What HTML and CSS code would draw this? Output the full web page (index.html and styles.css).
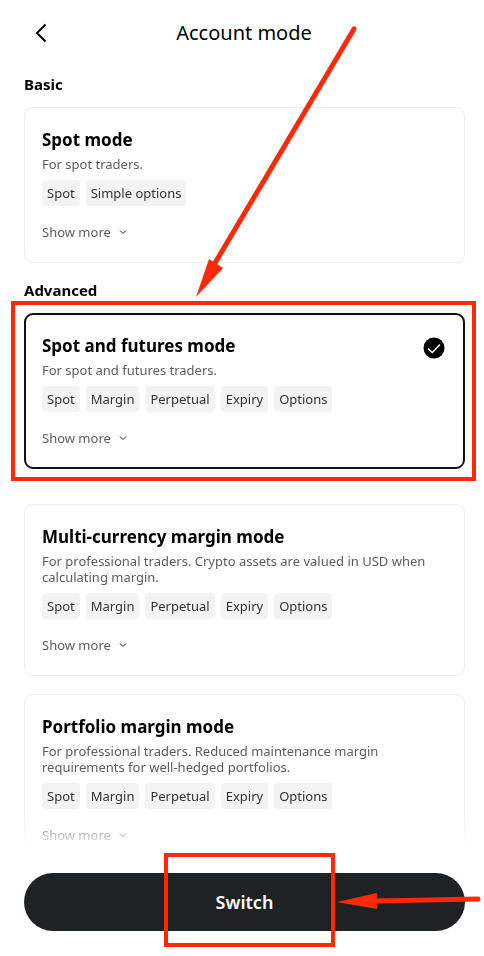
FILE: index.html
```html
<!DOCTYPE html>
<html lang="en">
<head>
<meta charset="utf-8">
<meta name="viewport" content="width=device-width, initial-scale=1">
<title>Account mode</title>
<link rel="stylesheet" href="styles.css">
</head>
<body>
<header class="topbar">
  <button class="back" type="button" aria-label="Back">
    <svg width="12" height="20" viewBox="0 0 12 20"><path d="M10.500 1.500 2 10 10.500 18.500" /></svg>
  </button>
  <h1 class="page-title">Account mode</h1>
</header>

<main class="modes">
  <section class="group">
    <h2 class="group-title">Basic</h2>
    <article class="card">
      <h3 class="card-title">Spot mode</h3>
      <p class="card-text">For spot traders.</p>
      <ul class="tags"><li class="tag">Spot</li><li class="tag">Simple options</li></ul>
      <button class="more" type="button">Show more <svg class="chevron" viewBox="0 0 8 6"><path d="M1 1.500 4 4.500 7 1.500" /></svg></button>
    </article>
  </section>

  <section class="group">
    <h2 class="group-title">Advanced</h2>
    <article class="card card-selected">
      <h3 class="card-title">Spot and futures mode</h3>
      <p class="card-text">For spot and futures traders.</p>
      <ul class="tags"><li class="tag">Spot</li><li class="tag">Margin</li><li class="tag">Perpetual</li><li class="tag">Expiry</li><li class="tag">Options</li></ul>
      <button class="more" type="button">Show more <svg class="chevron" viewBox="0 0 8 6"><path d="M1 1.500 4 4.500 7 1.500" /></svg></button>
      <svg class="check" viewBox="0 0 22 22" role="img" aria-label="Selected"><circle cx="11" cy="11" r="10.500" /><path d="M5 11.500 9.300 15.500 17 7.500" /></svg>
      <span class="frame frame-card"></span>
    </article>
    <article class="card">
      <h3 class="card-title">Multi-currency margin mode</h3>
      <p class="card-text">For professional traders. Crypto assets are valued in USD when calculating margin.</p>
      <ul class="tags"><li class="tag">Spot</li><li class="tag">Margin</li><li class="tag">Perpetual</li><li class="tag">Expiry</li><li class="tag">Options</li></ul>
      <button class="more" type="button">Show more <svg class="chevron" viewBox="0 0 8 6"><path d="M1 1.500 4 4.500 7 1.500" /></svg></button>
    </article>
    <article class="card">
      <h3 class="card-title">Portfolio margin mode</h3>
      <p class="card-text">For professional traders. Reduced maintenance margin requirements for well-hedged portfolios.</p>
      <ul class="tags"><li class="tag">Spot</li><li class="tag">Margin</li><li class="tag">Perpetual</li><li class="tag">Expiry</li><li class="tag">Options</li></ul>
      <button class="more" type="button">Show more <svg class="chevron" viewBox="0 0 8 6"><path d="M1 1.500 4 4.500 7 1.500" /></svg></button>
    </article>
  </section>
</main>

<footer class="actions">
  <button class="switch" type="button">Switch<span class="frame frame-switch"></span></button>
  <svg class="arrow arrow-switch" viewBox="0 0 148 20" aria-hidden="true"><path class="shaft" d="M40 11 142 9" /><path class="head" d="M1 12 41 3V19Z" /></svg>
</footer>

<svg class="arrow arrow-card" viewBox="0 0 164 276" aria-hidden="true"><path class="shaft" d="M159 6 20 240" /><path class="head" d="M1 274 14 236 28 245Z" /></svg>
</body>
</html>
```
FILE: styles.css
```css
* { box-sizing: border-box; margin: 0; padding: 0; }

body {
  position: relative;
  display: flex;
  flex-direction: column;
  height: 100vh;
  overflow: hidden;
  background: #fff;
  color: #000;
  font-family: "Noto Sans", sans-serif;
}

button { border: 0; background: none; font: inherit; color: inherit; cursor: pointer; }
svg { display: block; fill: none; stroke: currentColor; }

.topbar {
  display: grid;
  grid-template-columns: 1fr auto 1fr;
  align-items: center;
  padding: 17px 20px 8px 24px;
}
.back { justify-self: start; padding: 6px 11px; }
.back svg { stroke-width: 2; }
.page-title { font-size: 20px; line-height: 32px; font-weight: 400; }

.modes {
  position: relative;
  flex: 1;
  min-height: 0;
  overflow-y: auto;
  scrollbar-width: none;
  padding: 16px 19px 16px 24px;
  -webkit-mask-image: linear-gradient(to top, transparent, #000 36px);
  mask-image: linear-gradient(to top, transparent, #000 36px);
}
.group + .group { margin-top: 16px; }
.group-title { margin-bottom: 12px; font-size: 15px; line-height: 22px; font-weight: 700; }

.card {
  position: relative;
  padding: 20px 17px;
  border: 1px solid #ececec;
  border-radius: 9px;
}
.card + .card { margin-top: 18px; }
.card-selected { padding: 19px 16px; border: 2px solid #111; }
.card-selected + .card { margin-top: 35px; }
.card-title { font-size: 17px; line-height: 24px; font-weight: 700; }
.card-text { margin-top: 4px; font-size: 13px; line-height: 16px; color: #5c5c5c; }

.tags { display: flex; flex-wrap: wrap; gap: 6px; margin-top: 8px; list-style: none; }
.tag {
  padding: 0 5px;
  border-radius: 4px;
  background: #f3f3f3;
  color: #333;
  font-size: 13px;
  line-height: 26px;
}
.more {
  display: flex;
  align-items: center;
  gap: 8px;
  margin-top: 16px;
  color: #5c5c5c;
  font-size: 13px;
  line-height: 20px;
}
.chevron { width: 8px; height: 6px; color: #222; }
.check { position: absolute; top: 22px; right: 18px; width: 22px; height: 22px; }
.check circle { fill: #000; stroke: none; }
.check path { stroke: #fff; stroke-width: 1.5; }

.actions { position: relative; padding: 23px 19px 25px 24px; }
.switch {
  position: relative;
  display: block;
  width: 100%;
  border-radius: 29px;
  background: #1e2224;
  color: #fff;
  font-size: 18px;
  line-height: 58px;
  font-weight: 600;
}

.frame { position: absolute; border: 4px solid #ff2a05; pointer-events: none; }
.frame-card { inset: -14px -13px -14px -15px; }
.frame-switch { top: -20px; bottom: -16px; left: 50%; width: 171px; margin-left: -81px; }

.arrow { position: absolute; color: #ff2a05; pointer-events: none; }
.arrow .shaft { stroke-width: 5; stroke-linecap: round; }
.arrow .head { fill: currentColor; stroke: none; }
.arrow-card { top: 23px; left: 195px; width: 164px; height: 276px; }
.arrow-switch { top: 40px; right: 0; width: 148px; height: 20px; }
```
